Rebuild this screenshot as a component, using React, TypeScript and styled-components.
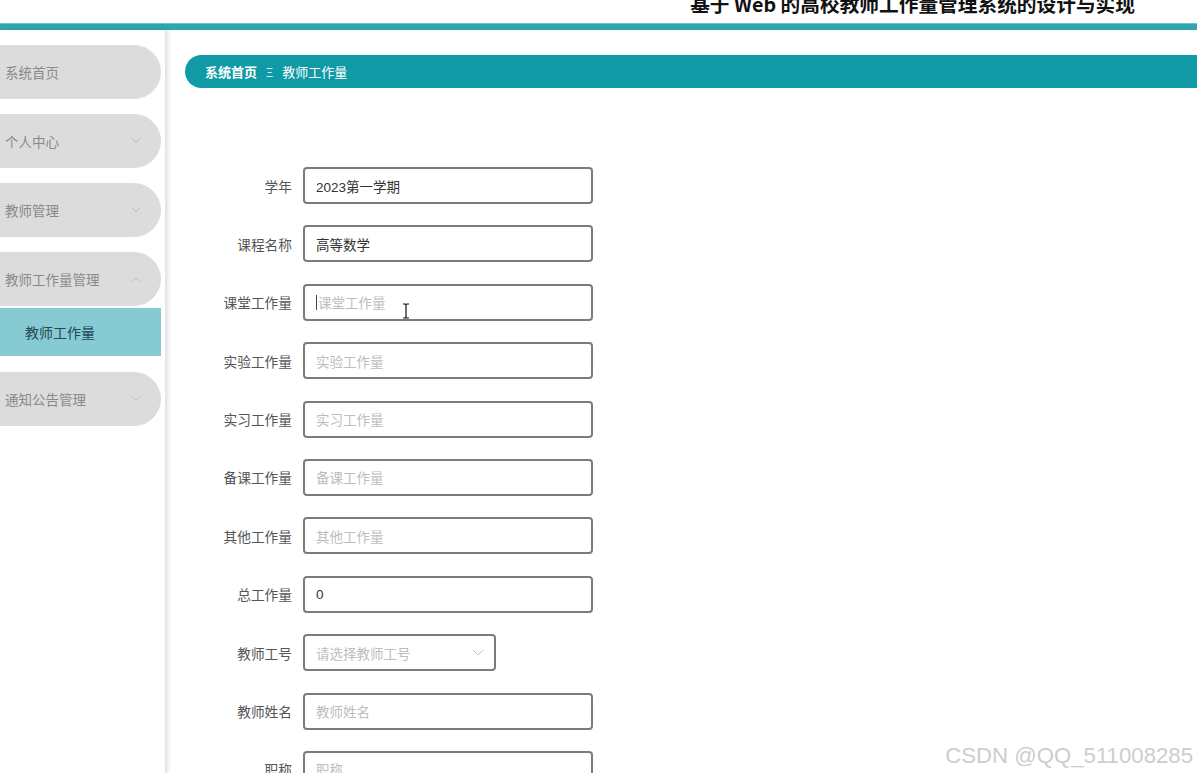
import React, { FC } from 'react';
import styled, { createGlobalStyle } from 'styled-components';

const GlobalStyle = createGlobalStyle`
  html, body {
    margin: 0;
    padding: 0;
    background: #fff;
    overflow: hidden;
    font-family: "Noto Sans CJK SC", "Liberation Sans", sans-serif;
  }
  * {
    box-sizing: border-box;
  }
`;

const Page = styled.div`
  width: 1197px;
  height: 773px;
  display: flex;
  flex-direction: column;
  overflow: hidden;
  position: relative;
`;

const Header = styled.header`
  height: 30px;
  display: flex;
  flex-direction: column;
  flex-shrink: 0;
`;

const TitleRow = styled.div`
  height: 23px;
  overflow: hidden;
  display: flex;
  justify-content: flex-end;
  align-items: flex-end;
  padding-right: 62px;
`;

const Title = styled.h1`
  margin: 0 0 9px;
  font-size: 19.7px;
  line-height: 20px;
  font-weight: 700;
  color: #111;
  white-space: nowrap;
`;

const TealBar = styled.div`
  height: 7px;
  background: #2ea6b1;
  border-top: 1px solid #6cc4cc;
`;

const Body = styled.div`
  flex: 1;
  display: flex;
  min-height: 0;
`;

const Sidebar = styled.nav`
  width: 166px;
  flex-shrink: 0;
  padding-top: 15px;
  background: #fff;
  box-shadow: 2px 0 4px rgba(0, 0, 0, 0.12);
  border-right: 1px solid #e4e4e4;
  display: flex;
  flex-direction: column;
  position: relative;
  z-index: 1;
`;

const MenuItem = styled.div`
  width: 188px;
  height: 54px;
  flex-shrink: 0;
  margin-left: -27px;
  margin-bottom: 15px;
  padding: 0 20px 0 32px;
  border-radius: 27px;
  background: #dcdcdc;
  display: flex;
  align-items: center;
  justify-content: space-between;
  font-size: 13.5px;
  color: #8a8a8a;
`;

const MenuGroup = styled.div`
  display: flex;
  flex-direction: column;
  margin-bottom: 16px;

  ${MenuItem} {
    margin-bottom: 2px;
  }
`;

const SubItem = styled.div`
  width: 161px;
  height: 48px;
  padding-left: 25px;
  display: flex;
  align-items: center;
  background: #86cad3;
  font-size: 14px;
  color: #254852;
`;

const Chevron: FC<{ up?: boolean }> = ({ up }) => (
  <svg width="10" height="6" viewBox="0 0 10 6" fill="none">
    <path
      d={up ? 'M1 5.5 L5 1.5 L9 5.5' : 'M1 0.5 L5 4.5 L9 0.5'}
      stroke="#b8b8b8"
      strokeWidth="1"
    />
  </svg>
);

const Main = styled.main`
  flex: 1;
  padding: 25px 0 0 19px;
  display: flex;
  flex-direction: column;
  min-width: 0;
`;

const Breadcrumb = styled.div`
  height: 33px;
  flex-shrink: 0;
  margin-right: -30px;
  padding-left: 20px;
  border-radius: 17px 0 0 17px;
  background: #109aa5;
  display: flex;
  align-items: center;
  gap: 9px;
  font-size: 13px;
  color: #fff;
`;

const Crumb = styled.span<{ $bold?: boolean }>`
  font-weight: ${p => (p.$bold ? 700 : 400)};
`;

const Separator = styled.span`
  font-size: 12px;
  color: #d6f0f2;
`;

const Form = styled.form`
  margin-top: 79px;
  display: flex;
  flex-direction: column;
`;

const Row = styled.div`
  display: flex;
  flex-shrink: 0;
  align-items: center;
  gap: 11px;
  margin-bottom: 21.4px;
`;

const Label = styled.label`
  width: 107px;
  text-align: right;
  font-size: 13.7px;
  color: #555;
  white-space: nowrap;
`;

const Field = styled.div<{ $width?: number }>`
  width: ${p => p.$width ?? 290}px;
  height: 37px;
  border: 2px solid #7c7c7c;
  border-radius: 4px;
  padding: 0 10px 0 11px;
  display: flex;
  align-items: center;
  justify-content: space-between;
  position: relative;
  font-size: 13.5px;
  background: #fff;
`;

const Value = styled.span<{ $placeholder?: boolean }>`
  color: ${p => (p.$placeholder ? '#bdbdbd' : '#333')};
  font-family: "Liberation Sans", "Noto Sans CJK SC", sans-serif;
`;

const Caret = styled.span`
  display: inline-block;
  width: 1px;
  height: 15px;
  background: #444;
  margin-right: 1px;
  vertical-align: -2px;
`;

const MouseCursor = styled.svg`
  position: absolute;
  left: 97px;
  top: 17px;
`;

const Watermark = styled.div`
  position: absolute;
  right: 4px;
  bottom: 4px;
  font-family: "Liberation Sans", sans-serif;
  font-size: 22.2px;
  color: #cdcdcd;
  text-shadow: 0 0 1px #fff;
`;

type FieldDef = {
  label: string;
  value?: string;
  placeholder?: string;
  select?: boolean;
  focused?: boolean;
};

const fields: FieldDef[] = [
  { label: '学年', value: '2023第一学期' },
  { label: '课程名称', value: '高等数学' },
  { label: '课堂工作量', placeholder: '课堂工作量', focused: true },
  { label: '实验工作量', placeholder: '实验工作量' },
  { label: '实习工作量', placeholder: '实习工作量' },
  { label: '备课工作量', placeholder: '备课工作量' },
  { label: '其他工作量', placeholder: '其他工作量' },
  { label: '总工作量', value: '0' },
  { label: '教师工号', placeholder: '请选择教师工号', select: true },
  { label: '教师姓名', placeholder: '教师姓名' },
  { label: '职称', placeholder: '职称' },
];

const App: FC = () => (
  <>
    <GlobalStyle />
    <Page>
      <Header>
        <TitleRow>
          <Title>基于 Web 的高校教师工作量管理系统的设计与实现</Title>
        </TitleRow>
        <TealBar />
      </Header>
      <Body>
        <Sidebar>
          <MenuItem>系统首页</MenuItem>
          <MenuItem>
            个人中心
            <Chevron />
          </MenuItem>
          <MenuItem>
            教师管理
            <Chevron />
          </MenuItem>
          <MenuGroup>
            <MenuItem>
              教师工作量管理
              <Chevron up />
            </MenuItem>
            <SubItem>教师工作量</SubItem>
          </MenuGroup>
          <MenuItem>
            通知公告管理
            <Chevron />
          </MenuItem>
        </Sidebar>
        <Main>
          <Breadcrumb>
            <Crumb $bold>系统首页</Crumb>
            <Separator>Ξ</Separator>
            <Crumb>教师工作量</Crumb>
          </Breadcrumb>
          <Form>
            {fields.map(f => (
              <Row key={f.label}>
                <Label>{f.label}</Label>
                <Field $width={f.select ? 193 : 290}>
                  <Value $placeholder={!f.value}>
                    {f.focused && <Caret />}
                    {f.value ?? f.placeholder}
                  </Value>
                  {f.select && (
                    <svg width="12" height="7" viewBox="0 0 12 7" fill="none">
                      <path d="M1 1 L6 6 L11 1" stroke="#c0c0c0" strokeWidth="1" />
                    </svg>
                  )}
                  {f.focused && (
                    <MouseCursor width="8" height="16" viewBox="0 0 8 16">
                      <path
                        d="M1 1 H3 Q4 1 4 2 Q4 1 5 1 H7 M4 2 V14 M1 15 H3 Q4 15 4 14 Q4 15 5 15 H7"
                        stroke="#111"
                        strokeWidth="1.2"
                        fill="none"
                      />
                    </MouseCursor>
                  )}
                </Field>
              </Row>
            ))}
          </Form>
        </Main>
      </Body>
      <Watermark>CSDN @QQ_511008285</Watermark>
    </Page>
  </>
);

export default App;
